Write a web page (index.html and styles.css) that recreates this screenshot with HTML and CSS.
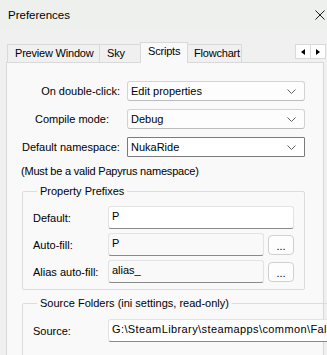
FILE: index.html
```html
<!DOCTYPE html>
<html lang="en">
<head>
    <meta charset="UTF-8">
    <title>Preferences</title>

    <link rel="stylesheet" href="styles.css">
</head>
<body>
<div class="titlebar">
    <span class="title">Preferences</span>
    <svg class="close" width="10" height="10" viewBox="0 0 10 10">
        <path d="M0.5 0.5 L9.5 9.5 M9.5 0.5 L0.5 9.5" stroke="#1a1a1a" stroke-width="1" fill="none"/>
    </svg>
</div>

<div class="tabs">
    <div class="tab tab-preview">Preview Window</div>
    <div class="tab tab-sky">Sky</div>
    <div class="tab tab-scripts active">Scripts</div>
    <div class="tab tab-flow">Flowchart</div>
    <div class="scroller">
        <span class="scroll-btn"><span class="arrow arrow-left"></span></span>
        <span class="scroll-btn"><span class="arrow arrow-right"></span></span>
    </div>
</div>

<div class="panel">
    <div class="field">
        <label class="field-label lbl-dbl">On double-click:</label>
        <div class="combo">
            <span>Edit properties</span>
            <svg class="chevron" width="9" height="5" viewBox="0 0 9 5"><path d="M0.5 0.5 L4.5 4.5 L8.5 0.5" stroke="#606060" fill="none"/></svg>
        </div>
    </div>
    <div class="field">
        <label class="field-label lbl-compile">Compile mode:</label>
        <div class="combo">
            <span>Debug</span>
            <svg class="chevron" width="9" height="5" viewBox="0 0 9 5"><path d="M0.5 0.5 L4.5 4.5 L8.5 0.5" stroke="#606060" fill="none"/></svg>
        </div>
    </div>
    <div class="field field-ns">
        <label class="field-label lbl-ns">Default namespace:</label>
        <div class="combo combo-edit">
            <span>NukaRide</span>
            <svg class="chevron" width="9" height="5" viewBox="0 0 9 5"><path d="M0.5 0.5 L4.5 4.5 L8.5 0.5" stroke="#606060" fill="none"/></svg>
        </div>
    </div>

    <p class="note">(Must be a valid Papyrus namespace)</p>

    <fieldset class="group">
        <legend>Property Prefixes</legend>
        <div class="entry">
            <label class="entry-label">Default:</label>
            <div class="textbox">P</div>
        </div>
        <div class="entry">
            <label class="entry-label">Auto-fill:</label>
            <div class="textbox readonly">P</div>
            <div class="dots-btn">...</div>
        </div>
        <div class="entry">
            <label class="entry-label">Alias auto-fill:</label>
            <div class="textbox readonly">alias_</div>
            <div class="dots-btn">...</div>
        </div>
    </fieldset>

    <fieldset class="group group-source">
        <legend>Source Folders (ini settings, read-only)</legend>
        <div class="entry">
            <label class="entry-label">Source:</label>
            <div class="textbox textbox-path">G:\SteamLibrary\steamapps\common\Fallout 4\Data\Scripts\Source</div>
        </div>
        <p class="hint">Import folders are searched in the listed order</p>
    </fieldset>
</div>
</body>
</html>
```

FILE: styles.css
```css
* {
    margin: 0;
    padding: 0;
    box-sizing: border-box;
}

body {
    width: 327px;
    height: 355px;
    overflow: hidden;
    background-color: #f0f0f0;
    color: #000;
    font-family: "Liberation Sans", Arial, sans-serif;
    font-size: 11px;
}

.titlebar {
    height: 30px;
    display: flex;
    align-items: center;
    justify-content: space-between;
    padding: 0 2px 0 8px;
    background-color: #eef0ee;
}

.title {
    font-size: 11.5px;
}

.close {
    display: block;
    margin-top: -1px;
}

/* tab strip */
.tabs {
    display: flex;
    align-items: flex-end;
    height: 20px;
    margin-top: 12px;
    padding-left: 7px;
    position: relative;
    z-index: 1;
}

.tab {
    height: 18px;
    line-height: 17px;
    padding-left: 7px;
    border: 1px solid #d9d9d9;
    border-bottom: none;
    background-color: #f0f0f0;
    white-space: nowrap;
    overflow: hidden;
    letter-spacing: -0.2px;
}

.tab + .tab {
    margin-left: -1px;
}

.tab-preview {
    width: 93px;
}

.tab-sky {
    width: 42px;
}

.tab-scripts {
    width: 48px;
}

.tab-flow {
    width: 55px;
    padding-left: 6px;
}

.tab.active {
    height: 21px;
    margin-bottom: -1px;
    background-color: #f9f9f9;
    position: relative;
    z-index: 2;
}

.scroller {
    display: flex;
    align-self: flex-start;
    margin: 2px 1px 0 auto;
}

.scroll-btn {
    width: 16px;
    height: 15px;
    border: 1px solid #d9d9d9;
    background-color: #fdfdfd;
    display: flex;
    align-items: center;
    justify-content: center;
}

.scroll-btn + .scroll-btn {
    margin-left: -1px;
}

.arrow {
    width: 0;
    height: 0;
    border-top: 3px solid transparent;
    border-bottom: 3px solid transparent;
}

.arrow-left {
    border-right: 4px solid #000;
}

.arrow-right {
    border-left: 4px solid #000;
}

/* page */
.panel {
    margin-left: 6px;
    width: 318px;
    height: 400px;
    padding: 18px 18px 0 15px;
    border: 1px solid #d9d9d9;
    background-color: #f9f9f9;
}

.field {
    display: flex;
    align-items: center;
    height: 20px;
    margin-bottom: 8px;
}

.field-ns {
    margin-top: 1px;
    margin-bottom: 7px;
}

.field-label {
    width: 105px;
    flex: none;
    text-align: right;
    white-space: nowrap;
}

.lbl-dbl {
    padding-right: 7px;
}

.lbl-compile {
    padding-right: 18px;
}

.lbl-ns {
    padding-right: 12px;
}

.combo {
    flex: 1;
    height: 20px;
    display: flex;
    align-items: center;
    justify-content: space-between;
    padding: 0 8px 0 3px;
    border: 1px solid #d3d3d3;
    border-bottom-color: #bcbcbc;
    border-radius: 3px;
    background-color: #fdfdfd;
}

.combo-edit {
    border-color: #7a7a7a;
    border-radius: 1px;
    background-color: #fff;
}

.chevron {
    display: block;
}

.note {
    margin-left: -1px;
    line-height: 15px;
    letter-spacing: -0.2px;
}

.group {
    margin-top: 5px;
    padding: 7px 10px 6px 10px;
    border: 1px solid #dcdcdc;
    border-radius: 2px;
}

.group legend {
    margin-left: 4px;
    padding: 0 3px;
    line-height: 15px;
}

.group-source {
    margin-top: 6px;
    padding-top: 8px;
}

.entry {
    display: flex;
    align-items: center;
    height: 23px;
    margin-bottom: 4px;
}

.entry:last-child {
    margin-bottom: 0;
}

.entry-label {
    width: 75px;
    flex: none;
    white-space: nowrap;
}

.textbox {
    flex: 1;
    min-width: 0;
    height: 23px;
    line-height: 19px;
    padding-left: 3px;
    border: 1px solid #e3e3e3;
    border-bottom-color: #8a8a8a;
    border-radius: 3px;
    background-color: #fff;
    white-space: nowrap;
    overflow: hidden;
}

.textbox.readonly {
    background-color: #f9f9f9;
}

.textbox-path {
    letter-spacing: 0.4px;
}

.dots-btn {
    width: 26px;
    height: 20px;
    flex: none;
    margin-left: 4px;
    border: 1px solid #d0d0d0;
    border-radius: 4px;
    background-color: #fdfdfd;
    text-align: center;
    line-height: 20px;
}

.hint {
    margin-top: 11px;
    line-height: 15px;
}
```
